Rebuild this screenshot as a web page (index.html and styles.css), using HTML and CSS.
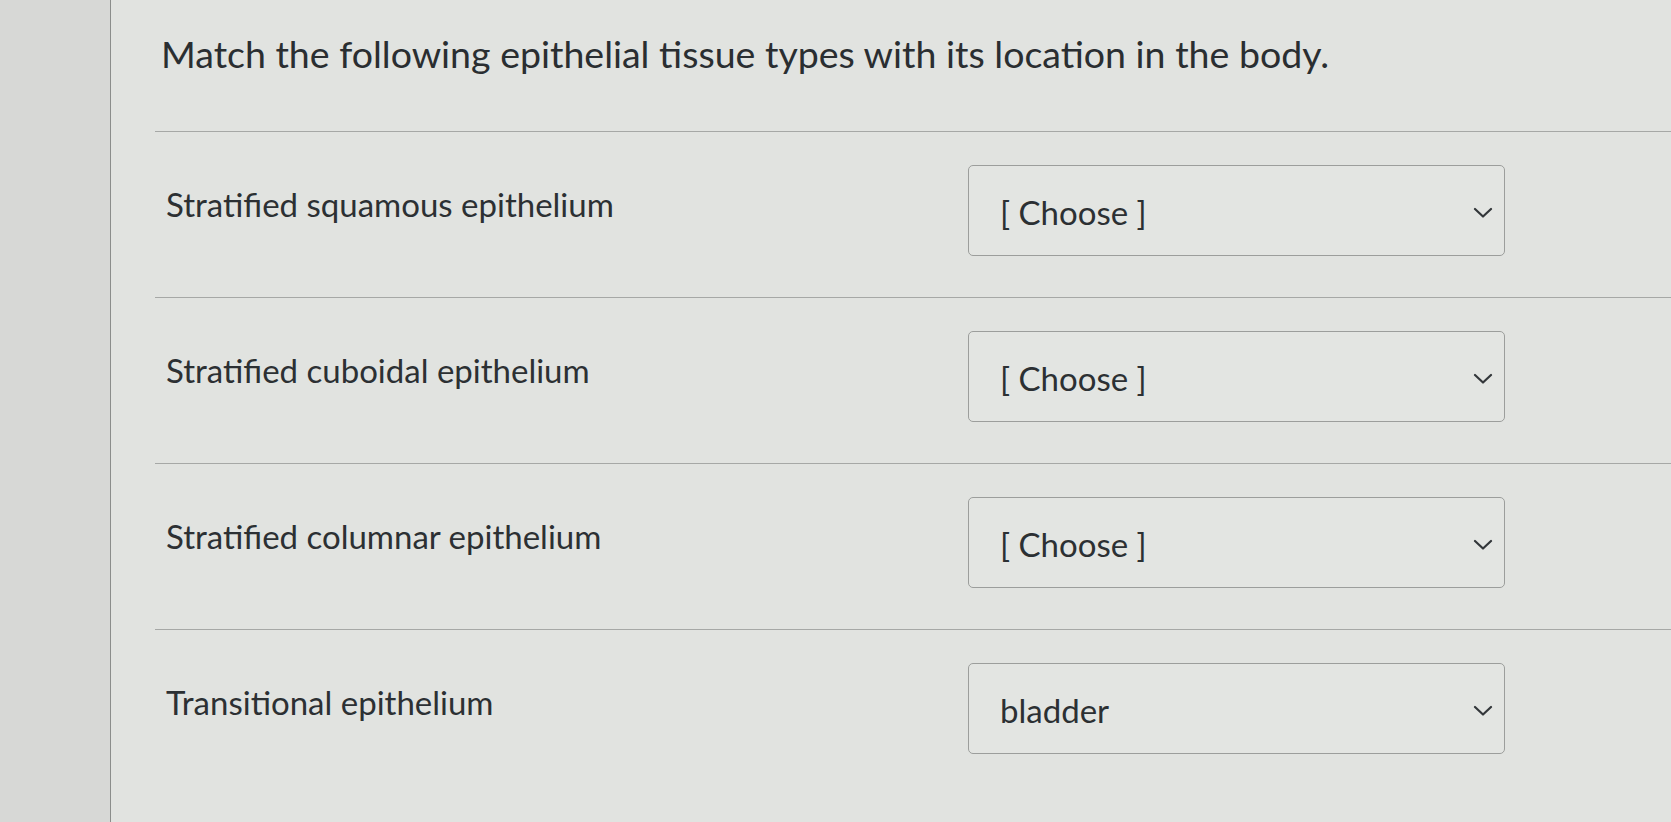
FILE: index.html
```html
<!DOCTYPE html>
<html lang="en">
<head>
<meta charset="utf-8">
<title>Matching question</title>
<link rel="stylesheet" href="styles.css">
</head>
<body>
<div class="page">
  <div class="gutter"></div>
  <main class="content">
    <h1 class="question">Match the following epithelial tissue types with its location in the body.</h1>
    <div class="row">
      <div class="label">Stratified squamous epithelium</div>
      <div class="select"><span>[ Choose ]</span><svg class="chev" viewBox="0 0 20 11"><path d="M2 2 L10 9.5 L18 2"/></svg></div>
    </div>
    <div class="row">
      <div class="label">Stratified cuboidal epithelium</div>
      <div class="select"><span>[ Choose ]</span><svg class="chev" viewBox="0 0 20 11"><path d="M2 2 L10 9.5 L18 2"/></svg></div>
    </div>
    <div class="row">
      <div class="label">Stratified columnar epithelium</div>
      <div class="select"><span>[ Choose ]</span><svg class="chev" viewBox="0 0 20 11"><path d="M2 2 L10 9.5 L18 2"/></svg></div>
    </div>
    <div class="row">
      <div class="label">Transitional epithelium</div>
      <div class="select"><span>bladder</span><svg class="chev" viewBox="0 0 20 11"><path d="M2 2 L10 9.5 L18 2"/></svg></div>
    </div>
  </main>
</div>
</body>
</html>
```
FILE: styles.css
```css
html, body {
  margin: 0;
  padding: 0;
}
body {
  font-family: Lato, "Open Sans", "Liberation Sans", sans-serif;
  color: #2c3033;
  background: #e1e3e0;
}
.page {
  display: flex;
  height: 822px;
  overflow: hidden;
}
.gutter {
  width: 110px;
  flex: none;
  background: #d7d8d6;
  border-right: 1px solid #8b8d8b;
}
.content {
  flex: 1;
  padding-left: 44px;
  background: #e1e3e0;
}
.question {
  margin: 31px 0 55px 6px;
  font-size: 37.5px;
  font-weight: 400;
  line-height: 45px;
  color: #2a2e31;
}
.row {
  display: grid;
  grid-template-columns: 802px 537px;
  padding: 33px 0 41px 11px;
  border-top: 1px solid #a6a8a6;
}
.label {
  margin-top: 19px;
  font-size: 33px;
  line-height: 40px;
}
.select {
  box-sizing: border-box;
  height: 91px;
  display: flex;
  align-items: center;
  justify-content: space-between;
  padding: 3px 11px 0 31px;
  border: 1px solid #9c9e9c;
  border-radius: 5px;
  font-size: 33px;
  background: #e3e5e2;
}
.chev {
  width: 20px;
  height: 11px;
  fill: none;
  stroke: #33373a;
  stroke-width: 2.2;
  stroke-linecap: round;
  stroke-linejoin: round;
}
```
